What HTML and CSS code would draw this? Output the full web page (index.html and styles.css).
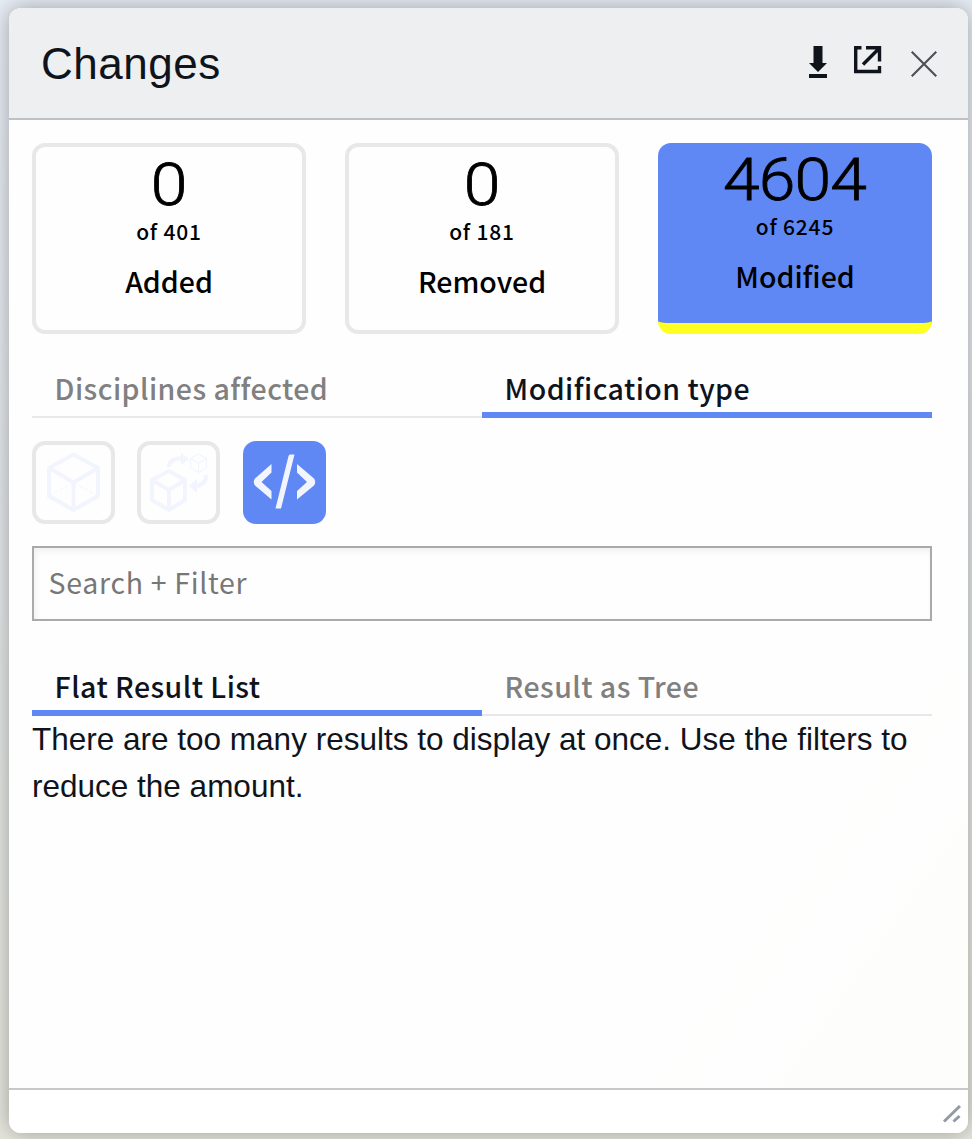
FILE: index.html
```
<!DOCTYPE html>
<html lang="en">

<head>
    <meta charset="UTF-8">
    <meta name="viewport" content="width=device-width, initial-scale=1.0">
    <title>Changes</title>
    <link rel="stylesheet" href="styles.css">
</head>

<body>
    <div class="panel">
        <header class="panel-header">
            <h1 class="title">Changes</h1>
            <div class="actions">
                <svg class="icon-download" width="18" height="32" viewBox="0 0 18 32">
                    <path d="M4.5 0h9v17H18l-9 9-9-9h4.500zM0 28h18v4H0z" fill="#0f141c" />
                </svg>
                <svg class="icon-open" width="28" height="28" viewBox="0 0 28 28" fill="none" stroke="#0f141c" stroke-width="3.4">
                    <path d="M7.500 1.700H1.700v23.800h23.800V20M12 1.700h13.500V15.500M9 18.500L25.500 2" />
                </svg>
                <svg class="icon-close" width="26" height="26" viewBox="0 0 26 26" stroke="#4b5055" stroke-width="2.1">
                    <path d="M.7 .7l24.6 24.6M25.3 .7L.7 25.3" />
                </svg>
            </div>
        </header>

        <main class="content">
            <div class="cards">
                <div class="card">
                    <div class="count">0</div>
                    <div class="total">of 401</div>
                    <div class="label">Added</div>
                </div>
                <div class="card">
                    <div class="count">0</div>
                    <div class="total">of 181</div>
                    <div class="label">Removed</div>
                </div>
                <div class="card card-active">
                    <div class="count">4604</div>
                    <div class="total">of 6245</div>
                    <div class="label">Modified</div>
                </div>
            </div>

            <div class="tabs tabs-filter">
                <div class="tab">Disciplines affected</div>
                <div class="tab active">Modification type</div>
            </div>

            <div class="types">
                <button class="type">
                    <svg width="75" height="75" viewBox="0 0 75 75" fill="none" stroke="#f2f5fe" stroke-width="4">
                        <path d="M37.5 9.5L62 23v28L37.5 65 13 51V23zM13 23l24.5 14.5L62 23M37.5 37.5V65" />
                        <path d="M37.5 37.5L13 51M37.5 37.5L62 51" stroke-width="1" stroke-dasharray="4 2" />
                    </svg>
                </button>
                <button class="type">
                    <svg width="75" height="75" viewBox="0 0 75 75" fill="none" stroke="#f2f5fe">
                        <path d="M28 26l16 9v20l-16 10-17-10V35zM11 35l17 10 16-10M28 45v20" stroke-width="4" />
                        <path d="M57.500 9l8 4.500v9l-8 5-8-5v-9zM49.500 13.500l8 4.500 8-4.500M57.500 18v9.500" stroke-width="1.200" />
                        <path d="M28 22c0-6 5-8.500 12-8.500M65 30c0 7-4 10.500-10 11" stroke-width="4" />
                        <path d="M40 7.500l8 6.500-8 6zM56 34v14l-8-7z" fill="#f2f5fe" stroke="none" />
                    </svg>
                </button>
                <button class="type type-active">
                    <svg width="83" height="83" viewBox="0 0 83 83" fill="#f2f5fe">
                        <path d="M28.500 23v8.500L18.500 41l10 9v8.500L12 44.500q-2.500-3.500 0-7zM54 23v8.500L64 41l-10 9v8.500L71 44.500q2.500-3.500 0-7zM45.500 15q.3-1.500 1.800-1.500h4.200L38 67.500h-5.500z" />
                    </svg>
                </button>
            </div>

            <input class="search" type="text" placeholder="Search + Filter">

            <div class="tabs tabs-result">
                <div class="tab active">Flat Result List</div>
                <div class="tab">Result as Tree</div>
            </div>

            <p class="message">There are too many results to display at once. Use the filters to reduce the amount.</p>
        </main>

        <footer class="panel-footer">
            <svg width="18" height="18" viewBox="0 0 18 18" stroke="#929aa5" stroke-width="3">
                <path d="M1 16.500L17 1M10.500 16.500l6-5.500" />
            </svg>
        </footer>
    </div>
</body>

</html>
```
FILE: styles.css
```
:root {
    --blue: #5f88f5;
    --line: #e8e8e8;
    --text: #0f141c;
    --ui-font: "Noto Sans CJK SC", "Noto Sans", sans-serif;
}

* {
    margin: 0;
    padding: 0;
    box-sizing: border-box;
}

body {
    height: 1139px;
    padding: 8px 4px 6px 9px;
    overflow: hidden;
    font-family: "Liberation Sans", Arial, sans-serif;
    color: var(--text);
    background: linear-gradient(#e7edf5, #e3e6e8 50%, #e6e6dd);
}

.panel {
    height: 1125px;
    display: flex;
    flex-direction: column;
    background: #fefefe;
    border-radius: 12px;
    box-shadow: 0 0 22px rgba(0, 0, 0, 0.32);
    overflow: hidden;
}

.panel-header {
    height: 112px;
    flex: none;
    display: flex;
    justify-content: space-between;
    padding: 0 31px 0 32px;
    background: #eeeff1;
    border-bottom: 2px solid #c0c0c0;
}

.title {
    font-size: 44px;
    font-weight: 400;
    line-height: 111px;
    letter-spacing: 0.5px;
}

.actions {
    display: flex;
    align-items: flex-start;
}

.icon-download {
    margin: 38px 27px 0 0;
}

.icon-open {
    margin: 38px 29px 0 0;
}

.icon-close {
    margin-top: 43px;
}

.content {
    flex: 1;
    padding: 23px 36px 0 23px;
    background: linear-gradient(125deg, #fefefe 80%, #fdfdfb);
}

.cards {
    display: flex;
    justify-content: space-between;
    font-family: var(--ui-font);
    color: #000;
}

.card {
    width: 274px;
    height: 191px;
    padding-top: 5px;
    border: 4px solid var(--line);
    border-radius: 13px;
    text-align: center;
}

.card-active {
    padding-top: 4px;
    border: none;
    border-bottom: 11px solid #ffff22;
    background: var(--blue);
}

.count {
    font-family: Roboto, sans-serif;
    font-size: 60px;
    font-weight: 300;
    line-height: 65px;
    letter-spacing: -0.8px;
    text-indent: -0.8px;
    transform: scaleX(1.1);
    -webkit-text-stroke: 0.8px #000;
}

.total {
    font-size: 21px;
    font-weight: 500;
    line-height: 28px;
    letter-spacing: 0.8px;
}

.label {
    margin-top: 16px;
    font-size: 28.5px;
    font-weight: 500;
    line-height: 40px;
}

.tabs {
    display: flex;
    font-family: var(--ui-font);
    font-size: 28.5px;
    font-weight: 500;
}

.tabs-filter {
    margin-top: 26px;
}

.tabs-result {
    margin-top: 37px;
}

.tab {
    width: 450px;
    height: 58px;
    padding-left: 22.6px;
    line-height: 55px;
    letter-spacing: 0.45px;
    color: #808080;
    box-shadow: inset 0 -2px var(--line);
}

.tab.active {
    color: var(--text);
    box-shadow: inset 0 -6px var(--blue);
}

.types {
    display: flex;
    gap: 22.4px;
    margin-top: 23px;
}

.type {
    width: 83px;
    height: 83px;
    border: 4px solid var(--line);
    border-radius: 13px;
    background: #fefefe;
}

.type svg {
    display: block;
}

.type-active {
    border: none;
    background: var(--blue);
}

.search {
    display: block;
    width: 900px;
    height: 75px;
    margin-top: 22px;
    padding: 0 14.500px 5px;
    border: 2px solid #aaa;
    background: #fefefe;
    box-shadow: inset 2px 3px 6px rgba(0, 0, 0, 0.06);
    font-family: var(--ui-font);
    font-size: 28.5px;
    letter-spacing: 0.7px;
}

.search::placeholder {
    color: #777;
}

.message {
    font-size: 31.5px;
    line-height: 47px;
}

.panel-footer {
    height: 45px;
    flex: none;
    display: flex;
    justify-content: flex-end;
    padding: 15px 7px 0 0;
    border-top: 2px solid #c8c8c8;
    background: #fff;
}
```
